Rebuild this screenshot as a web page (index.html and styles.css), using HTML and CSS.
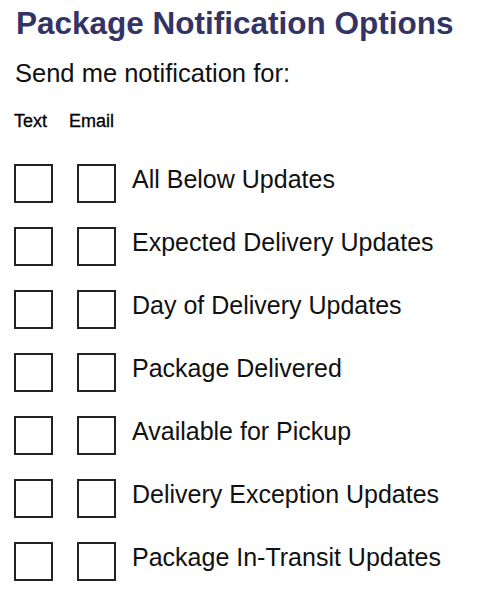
FILE: index.html
```html
<!DOCTYPE html>
<html lang="en">
<head>
    <meta charset="UTF-8">
    <meta name="viewport" content="width=device-width, initial-scale=1.0">
    <title>Package Notification Options</title>
    <link rel="stylesheet" href="styles.css">
</head>
<body>
    <div class="options">
        <h1>Package Notification Options</h1>
        <p class="intro">Send me notification for:</p>

        <div class="columns">
            <span class="col-text">Text</span>
            <span class="col-email">Email</span>
        </div>

        <ul class="option-list">
            <li>
                <input type="checkbox" aria-label="Text: All Below Updates">
                <input type="checkbox" aria-label="Email: All Below Updates">
                <span class="label">All Below Updates</span>
            </li>
            <li>
                <input type="checkbox" aria-label="Text: Expected Delivery Updates">
                <input type="checkbox" aria-label="Email: Expected Delivery Updates">
                <span class="label">Expected Delivery Updates</span>
            </li>
            <li>
                <input type="checkbox" aria-label="Text: Day of Delivery Updates">
                <input type="checkbox" aria-label="Email: Day of Delivery Updates">
                <span class="label">Day of Delivery Updates</span>
            </li>
            <li>
                <input type="checkbox" aria-label="Text: Package Delivered">
                <input type="checkbox" aria-label="Email: Package Delivered">
                <span class="label">Package Delivered</span>
            </li>
            <li>
                <input type="checkbox" aria-label="Text: Available for Pickup">
                <input type="checkbox" aria-label="Email: Available for Pickup">
                <span class="label">Available for Pickup</span>
            </li>
            <li>
                <input type="checkbox" aria-label="Text: Delivery Exception Updates">
                <input type="checkbox" aria-label="Email: Delivery Exception Updates">
                <span class="label">Delivery Exception Updates</span>
            </li>
            <li>
                <input type="checkbox" aria-label="Text: Package In-Transit Updates">
                <input type="checkbox" aria-label="Email: Package In-Transit Updates">
                <span class="label">Package In-Transit Updates</span>
            </li>
        </ul>
    </div>
</body>
</html>
```

FILE: styles.css
```css
* {
    margin: 0;
    padding: 0;
    box-sizing: border-box;
    font-family: "Liberation Sans", Arial, sans-serif;
}

body {
    background-color: #fff;
    color: #111;
}

.options {
    padding: 5px 14px 0 14px;
}

h1 {
    font-size: 31.5px;
    line-height: 36px;
    font-weight: bold;
    color: #333366;
    padding-left: 2px;
}

.intro {
    font-size: 25.5px;
    line-height: 30px;
    margin-top: 17px;
    padding-left: 1px;
}

.columns {
    display: flex;
    font-size: 18px;
    line-height: 22px;
    margin-top: 22px;
    color: #000;
    -webkit-text-stroke: 0.3px #000;
}

.col-text {
    width: 55px;
}

.option-list {
    list-style: none;
    margin-top: 32px;
    display: flex;
    flex-direction: column;
    gap: 24px;
}

.option-list li {
    display: flex;
    align-items: flex-start;
}

.option-list input[type="checkbox"] {
    appearance: none;
    -webkit-appearance: none;
    width: 39px;
    height: 39px;
    border: 2px solid #222;
    background-color: #fff;
    margin-right: 24px;
    flex-shrink: 0;
    cursor: pointer;
}

.option-list input[type="checkbox"]:last-of-type {
    margin-right: 16px;
}

.option-list input[type="checkbox"]:checked {
    background-color: #333366;
}

.label {
    font-size: 25px;
    line-height: 30px;
}
```
